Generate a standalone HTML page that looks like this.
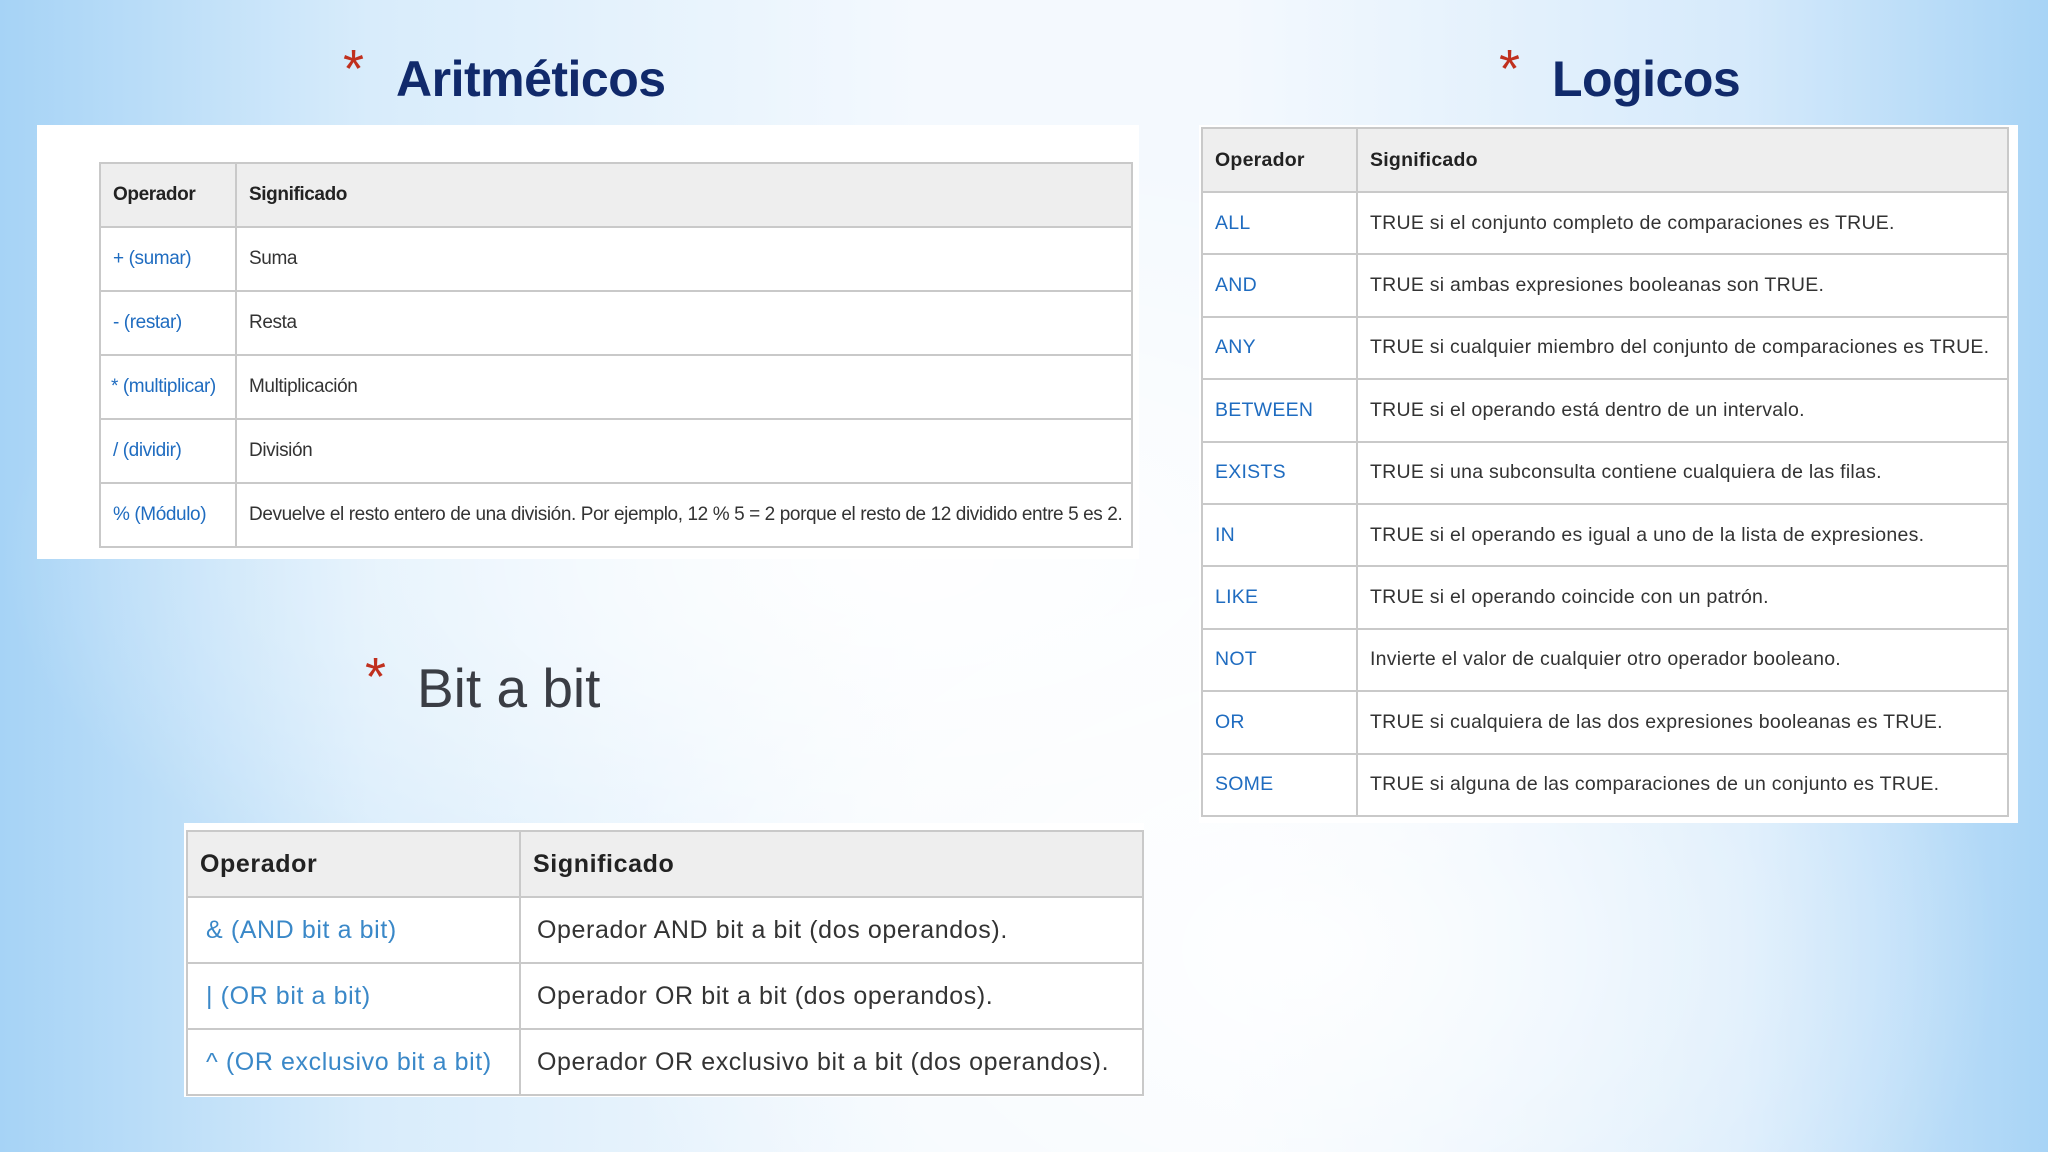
<!DOCTYPE html>
<html><head><meta charset="utf-8"><style>
*{margin:0;padding:0;box-sizing:border-box}
body{width:2048px;height:1152px;overflow:hidden;position:relative;font-family:"Liberation Sans",sans-serif;
background:
radial-gradient(ellipse 900px 420px at 900px 560px,rgba(255,255,255,0.95),rgba(255,255,255,0) 100%),
radial-gradient(ellipse 700px 500px at 1300px 950px,rgba(255,255,255,0.9),rgba(255,255,255,0) 100%),
linear-gradient(90deg,#a6d3f6 0%,#d8ecfb 18%,#f4f9fe 45%,#f4f9fe 60%,#d6eafb 85%,#a8d4f6 100%);}
.t{position:absolute;font-weight:bold;font-size:50px;color:#112a6b;white-space:nowrap;letter-spacing:-0.5px}
.ast{position:absolute;color:#c0301e;font-size:54px;font-weight:normal}
.panel{position:absolute;background:#fff}
table{position:absolute;border-collapse:collapse;table-layout:fixed}
td,th{border:2px solid #c9c9c9;text-align:left;padding:0 0 0 12px;white-space:nowrap;color:#333;font-weight:normal;overflow:hidden}
th{background:#eeeeee;font-weight:bold;color:#222}
td.o{color:#1f6cc0}
.ar{font-size:19px;letter-spacing:-0.4px}
.lg{font-size:19.5px;letter-spacing:0.25px}
.bb{font-size:25px;letter-spacing:0.6px}
.bb td.o{color:#3a88c8}
</style></head><body>

<div class="ast" style="left:343px;top:38px">*</div>
<div class="t" style="left:396px;top:50px">Aritméticos</div>
<div class="ast" style="left:1499px;top:38px">*</div>
<div class="t" style="left:1552px;top:50px">Logicos</div>
<div class="ast" style="left:365px;top:646px">*</div>
<div class="t" style="left:417px;top:656px;color:#3a3d44;font-weight:normal;font-size:55px;letter-spacing:0">Bit a bit</div>

<div class="panel" style="left:37px;top:125px;width:1102px;height:434px"></div>
<table class="ar" style="left:99px;top:162px;width:1034px">
<colgroup><col style="width:136px"><col></colgroup>
<tr style="height:64px"><th>Operador</th><th>Significado</th></tr>
<tr style="height:64px"><td class="o">+ (sumar)</td><td>Suma</td></tr>
<tr style="height:64px"><td class="o">- (restar)</td><td>Resta</td></tr>
<tr style="height:64px"><td class="o" style="padding-left:10px">* (multiplicar)</td><td>Multiplicación</td></tr>
<tr style="height:64px"><td class="o">/ (dividir)</td><td>División</td></tr>
<tr style="height:64px"><td class="o">% (Módulo)</td><td>Devuelve el resto entero de una división. Por ejemplo, 12 % 5 = 2 porque el resto de 12 dividido entre 5 es 2.</td></tr>
</table>

<div class="panel" style="left:1199px;top:125px;width:819px;height:698px"></div>
<table class="lg" style="left:1201px;top:127px;width:808px">
<colgroup><col style="width:155px"><col></colgroup>
<tr style="height:64px"><th>Operador</th><th>Significado</th></tr>
<tr style="height:62.4px"><td class="o">ALL</td><td>TRUE si el conjunto completo de comparaciones es TRUE.</td></tr>
<tr style="height:62.4px"><td class="o">AND</td><td>TRUE si ambas expresiones booleanas son TRUE.</td></tr>
<tr style="height:62.4px"><td class="o">ANY</td><td>TRUE si cualquier miembro del conjunto de comparaciones es TRUE.</td></tr>
<tr style="height:62.4px"><td class="o">BETWEEN</td><td>TRUE si el operando está dentro de un intervalo.</td></tr>
<tr style="height:62.4px"><td class="o">EXISTS</td><td>TRUE si una subconsulta contiene cualquiera de las filas.</td></tr>
<tr style="height:62.4px"><td class="o">IN</td><td>TRUE si el operando es igual a uno de la lista de expresiones.</td></tr>
<tr style="height:62.4px"><td class="o">LIKE</td><td>TRUE si el operando coincide con un patrón.</td></tr>
<tr style="height:62.4px"><td class="o">NOT</td><td>Invierte el valor de cualquier otro operador booleano.</td></tr>
<tr style="height:62.4px"><td class="o">OR</td><td>TRUE si cualquiera de las dos expresiones booleanas es TRUE.</td></tr>
<tr style="height:62.4px"><td class="o">SOME</td><td>TRUE si alguna de las comparaciones de un conjunto es TRUE.</td></tr>
</table>

<div class="panel" style="left:184px;top:823px;width:960px;height:274px"></div>
<table class="bb" style="left:186px;top:830px;width:958px">
<colgroup><col style="width:333px"><col></colgroup>
<tr style="height:66px"><th>Operador</th><th>Significado</th></tr>
<tr style="height:66px"><td class="o" style="padding-left:18px">&amp; (AND bit a bit)</td><td style="padding-left:16px">Operador AND bit a bit (dos operandos).</td></tr>
<tr style="height:66px"><td class="o" style="padding-left:18px">| (OR bit a bit)</td><td style="padding-left:16px">Operador OR bit a bit (dos operandos).</td></tr>
<tr style="height:66px"><td class="o" style="padding-left:18px">^ (OR exclusivo bit a bit)</td><td style="padding-left:16px">Operador OR exclusivo bit a bit (dos operandos).</td></tr>
</table>
</body></html>
